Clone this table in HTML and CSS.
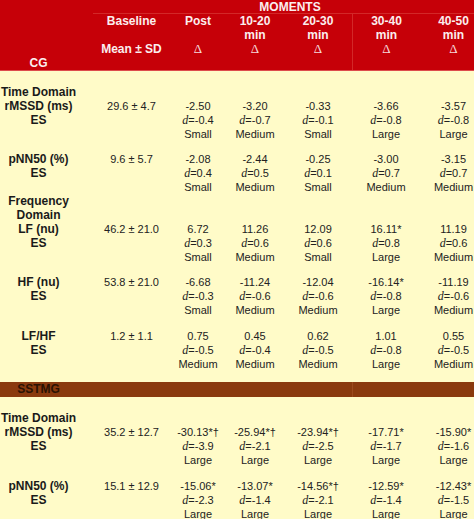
FILE: index.html
```html
<!DOCTYPE html>
<html>
<head>
<meta charset="utf-8">
<link rel="stylesheet" href="styles.css">
</head>
<body>
<div class="sheet">
  <div class="head">
    <div class="row hrow1">
      <div class="lab"></div>
      <div class="moments">MOMENTS</div>
    </div>
    <div class="row hrow2">
      <div class="hc lab cg">CG</div>
      <div class="hc"><div class="ln">Baseline</div><div class="ln"></div><div class="ln">Mean ± SD</div></div>
      <div class="hc"><div class="ln">Post</div><div class="ln"></div><div class="ln delta">Δ</div></div>
      <div class="hc"><div class="ln">10-20</div><div class="ln">min</div><div class="ln delta">Δ</div></div>
      <div class="hc"><div class="ln">20-30</div><div class="ln">min</div><div class="ln delta">Δ</div></div>
      <div class="hc sep"><div class="ln">30-40</div><div class="ln">min</div><div class="ln delta">Δ</div></div>
      <div class="hc"><div class="ln">40-50</div><div class="ln">min</div><div class="ln delta">Δ</div></div>
    </div>
  </div>

  <div class="grp">
    <div class="row r off1 pt-a">
      <div class="lab"><div class="ln">Time Domain</div><div class="ln">rMSSD (ms)</div><div class="ln">ES</div></div>
      <div class="dat"><div class="ln">29.6 ± 4.7</div></div>
      <div class="dat"><div class="ln">-2.50</div><div class="ln"><i>d</i>=-0.4</div><div class="ln">Small</div></div>
      <div class="dat"><div class="ln">-3.20</div><div class="ln"><i>d</i>=-0.7</div><div class="ln">Medium</div></div>
      <div class="dat"><div class="ln">-0.33</div><div class="ln"><i>d</i>=-0.1</div><div class="ln">Small</div></div>
      <div class="dat"><div class="ln">-3.66</div><div class="ln"><i>d</i>=-0.8</div><div class="ln">Large</div></div>
      <div class="dat"><div class="ln">-3.57</div><div class="ln"><i>d</i>=-0.8</div><div class="ln">Large</div></div>
    </div>

    <div class="row r pt-b">
      <div class="lab"><div class="ln">pNN50 (%)</div><div class="ln">ES</div></div>
      <div class="dat"><div class="ln">9.6 ± 5.7</div></div>
      <div class="dat"><div class="ln">-2.08</div><div class="ln"><i>d</i>=0.4</div><div class="ln">Small</div></div>
      <div class="dat"><div class="ln">-2.44</div><div class="ln"><i>d</i>=0.5</div><div class="ln">Medium</div></div>
      <div class="dat"><div class="ln">-0.25</div><div class="ln"><i>d</i>=0.1</div><div class="ln">Small</div></div>
      <div class="dat"><div class="ln">-3.00</div><div class="ln"><i>d</i>=0.7</div><div class="ln">Medium</div></div>
      <div class="dat"><div class="ln">-3.15</div><div class="ln"><i>d</i>=0.7</div><div class="ln">Medium</div></div>
    </div>

    <div class="row r off2 pt-c">
      <div class="lab"><div class="ln">Frequency</div><div class="ln">Domain</div><div class="ln">LF (nu)</div><div class="ln">ES</div></div>
      <div class="dat"><div class="ln">46.2 ± 21.0</div></div>
      <div class="dat"><div class="ln">6.72</div><div class="ln"><i>d</i>=0.3</div><div class="ln">Small</div></div>
      <div class="dat"><div class="ln">11.26</div><div class="ln"><i>d</i>=0.6</div><div class="ln">Medium</div></div>
      <div class="dat"><div class="ln">12.09</div><div class="ln"><i>d</i>=0.6</div><div class="ln">Small</div></div>
      <div class="dat"><div class="ln">16.11*</div><div class="ln"><i>d</i>=0.8</div><div class="ln">Large</div></div>
      <div class="dat"><div class="ln">11.19</div><div class="ln"><i>d</i>=0.6</div><div class="ln">Medium</div></div>
    </div>

    <div class="row r pt-d">
      <div class="lab"><div class="ln">HF (nu)</div><div class="ln">ES</div></div>
      <div class="dat"><div class="ln">53.8 ± 21.0</div></div>
      <div class="dat"><div class="ln">-6.68</div><div class="ln"><i>d</i>=-0.3</div><div class="ln">Small</div></div>
      <div class="dat"><div class="ln">-11.24</div><div class="ln"><i>d</i>=-0.6</div><div class="ln">Medium</div></div>
      <div class="dat"><div class="ln">-12.04</div><div class="ln"><i>d</i>=-0.6</div><div class="ln">Medium</div></div>
      <div class="dat"><div class="ln">-16.14*</div><div class="ln"><i>d</i>=-0.8</div><div class="ln">Large</div></div>
      <div class="dat"><div class="ln">-11.19</div><div class="ln"><i>d</i>=-0.6</div><div class="ln">Medium</div></div>
    </div>

    <div class="row r pt-e">
      <div class="lab"><div class="ln">LF/HF</div><div class="ln">ES</div></div>
      <div class="dat"><div class="ln">1.2 ± 1.1</div></div>
      <div class="dat"><div class="ln">0.75</div><div class="ln"><i>d</i>=-0.5</div><div class="ln">Medium</div></div>
      <div class="dat"><div class="ln">0.45</div><div class="ln"><i>d</i>=-0.4</div><div class="ln">Medium</div></div>
      <div class="dat"><div class="ln">0.62</div><div class="ln"><i>d</i>=-0.5</div><div class="ln">Medium</div></div>
      <div class="dat"><div class="ln">1.01</div><div class="ln"><i>d</i>=-0.8</div><div class="ln">Large</div></div>
      <div class="dat"><div class="ln">0.55</div><div class="ln"><i>d</i>=-0.5</div><div class="ln">Medium</div></div>
    </div>
  </div>

  <div class="row band">
    <div class="lab">SSTMG</div>
    <div></div><div></div><div></div><div></div>
    <div class="bsep"></div>
    <div></div>
  </div>

  <div class="grp">
    <div class="row r off1 pt-f">
      <div class="lab"><div class="ln">Time Domain</div><div class="ln">rMSSD (ms)</div><div class="ln">ES</div></div>
      <div class="dat"><div class="ln">35.2 ± 12.7</div></div>
      <div class="dat"><div class="ln">-30.13*†</div><div class="ln"><i>d</i>=-3.9</div><div class="ln">Large</div></div>
      <div class="dat"><div class="ln">-25.94*†</div><div class="ln"><i>d</i>=-2.1</div><div class="ln">Large</div></div>
      <div class="dat"><div class="ln">-23.94*†</div><div class="ln"><i>d</i>=-2.5</div><div class="ln">Large</div></div>
      <div class="dat"><div class="ln">-17.71*</div><div class="ln"><i>d</i>=-1.7</div><div class="ln">Large</div></div>
      <div class="dat"><div class="ln">-15.90*</div><div class="ln"><i>d</i>=-1.6</div><div class="ln">Large</div></div>
    </div>

    <div class="row r pt-g">
      <div class="lab"><div class="ln">pNN50 (%)</div><div class="ln">ES</div></div>
      <div class="dat"><div class="ln">15.1 ± 12.9</div></div>
      <div class="dat"><div class="ln">-15.06*</div><div class="ln"><i>d</i>=-2.3</div><div class="ln">Large</div></div>
      <div class="dat"><div class="ln">-13.07*</div><div class="ln"><i>d</i>=-1.4</div><div class="ln">Large</div></div>
      <div class="dat"><div class="ln">-14.56*†</div><div class="ln"><i>d</i>=-2.1</div><div class="ln">Large</div></div>
      <div class="dat"><div class="ln">-12.59*</div><div class="ln"><i>d</i>=-1.4</div><div class="ln">Large</div></div>
      <div class="dat"><div class="ln">-12.43*</div><div class="ln"><i>d</i>=-1.5</div><div class="ln">Large</div></div>
    </div>
  </div>
</div>
</body>
</html>
```

FILE: styles.css
```css
html, body {
  margin: 0;
  padding: 0;
}

body {
  background: #fffbc8;
  width: 474px;
  height: 519px;
  overflow: hidden;
  font-family: "Liberation Sans", Arial, sans-serif;
}

.sheet {
  width: 487px;
}

.row {
  display: grid;
  grid-template-columns: 93px 77px 56px 58px 68px 68px 67px;
}

.lab {
  padding-right: 16px;
  text-align: center;
}

.ln {
  min-height: 14px;
  line-height: 14px;
  white-space: nowrap;
}

/* header */
.head {
  background: #c60008;
  color: #fbeeee;
  font-weight: bold;
  font-size: 12px;
  border-bottom: 1px solid #dd4c4c;
}

.hrow1 {
  height: 14px;
}

.moments {
  grid-column: 2 / 8;
  text-align: center;
  padding-top: 1px;
  line-height: 13px;
  height: 12px;
  overflow: visible;
  border-bottom: 1px solid #d32828;
}

.hrow2 {
  height: 56px;
}

.hc {
  text-align: center;
  box-sizing: border-box;
}

.hc.cg {
  display: flex;
  align-items: flex-end;
  justify-content: center;
  line-height: 14px;
}

.hc.sep {
  border-left: 1px solid #d32828;
}

.delta {
  font-family: "Liberation Serif", "Times New Roman", serif;
  font-weight: normal;
  font-size: 13px;
  color: #f6d8d8;
}

/* body rows */
.r {
  color: #222;
  font-size: 11px;
}

.r .lab {
  font-weight: bold;
  font-size: 12px;
  color: #1a1a1a;
}

.dat {
  text-align: center;
}

.dat i {
  font-family: "Liberation Serif", "Times New Roman", serif;
  font-style: italic;
  font-size: 12px;
}

.off1 .dat {
  padding-top: 14px;
}

.off2 .dat {
  padding-top: 28px;
}

.pt-a { padding-top: 14px; }
.pt-b { padding-top: 11px; }
.pt-c { padding-top: 0; }
.pt-d { padding-top: 11px; }
.pt-e { padding-top: 12px; }
.pt-f { padding-top: 14px; }
.pt-g { padding-top: 12px; }

/* SSTMG band */
.band {
  margin-top: 11px;
  height: 15px;
  background: #8a3a0e;
}

.band .lab {
  font-weight: bold;
  font-size: 12px;
  line-height: 15px;
  color: #2a1204;
}

.band .bsep {
  border-left: 1px solid #9b4a1e;
}
```
